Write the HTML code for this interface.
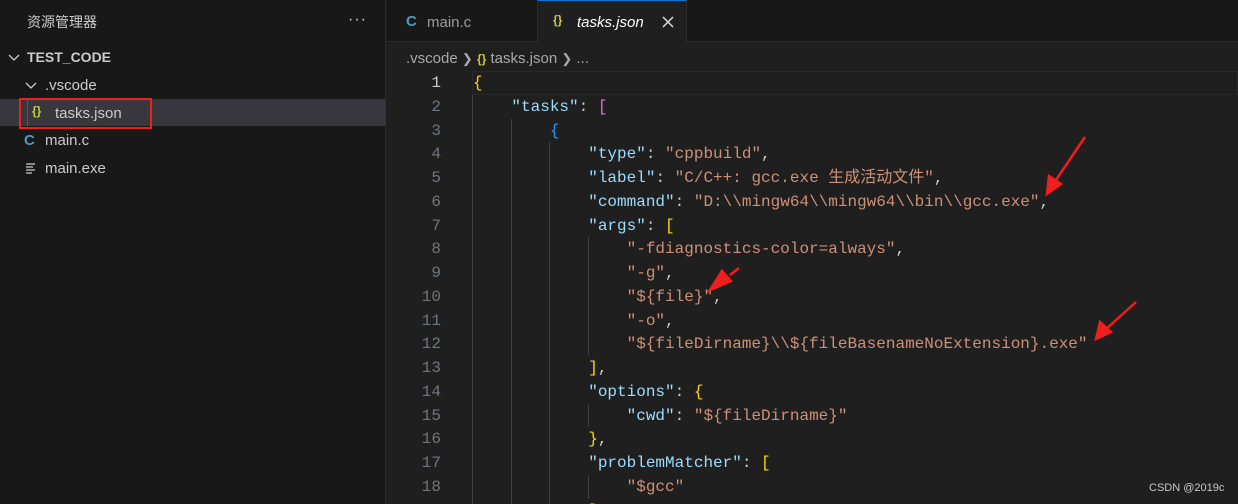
<!DOCTYPE html>
<html style="width:1238px;height:504px;overflow:hidden"><head><meta charset="utf-8"><style>
*{margin:0;padding:0;box-sizing:border-box}
body{width:1238px;height:504px;overflow:hidden;background:#1f1f1f;font-family:"Liberation Sans","Noto Sans CJK SC",sans-serif;position:relative}
.sb{position:absolute;left:0;top:0;width:386px;height:504px;background:#181818;border-right:1px solid #2b2b2b;color:#cccccc;font-size:15px}
.abs{position:absolute;white-space:pre}
.tabs{position:absolute;left:387px;top:0;right:0;height:42px;background:#181818;border-bottom:1px solid #2b2b2b}
.code{position:absolute;left:0;top:0;height:24px;line-height:24px;overflow:visible;font-family:"Liberation Mono","Noto Sans CJK SC",monospace;font-size:16px;white-space:pre}
.ln{position:absolute;left:387px;width:54px;height:24px;line-height:24px;text-align:right;color:#6e7681;font-family:"Liberation Mono",monospace;font-size:16px}
.k{color:#9cdcfe}.s{color:#ce9178}.p{color:#cccccc}.y{color:#ffd700}.m{color:#da70d6}.b{color:#179fff}
.g{position:absolute;width:1px;background:#404040}
#lines{position:absolute;left:0;top:0;width:1238px;height:504px;overflow:hidden}
</style></head><body>
<div class="sb">
 <div class="abs" style="left:27px;top:12px;font-size:14px;color:#cccccc">资源管理器</div>
 <div class="abs" style="left:348px;top:11px;font-size:16px;letter-spacing:1px">···</div>
 <svg class="abs" style="left:7px;top:52px" width="14" height="12"><path d="M2 3 L7 8 L12 3" stroke="#ccc" fill="none" stroke-width="1.3"/></svg>
 <div class="abs" style="left:27px;top:49px;font-size:14px;font-weight:bold">TEST_CODE</div>
 <svg class="abs" style="left:24px;top:80px" width="14" height="12"><path d="M2 3 L7 8 L12 3" stroke="#ccc" fill="none" stroke-width="1.3"/></svg>
 <div class="abs" style="left:45px;top:77px">.vscode</div>
 <div class="abs" style="left:0;top:99px;width:386px;height:27px;background:#37373d"></div>
 <div class="abs" style="left:27px;top:100px;width:1px;height:26px;background:#585858"></div>
 <div class="abs" style="left:19px;top:98px;width:133px;height:31px;border:2px solid #e8221f"></div>
 <div class="abs" style="left:32px;top:104px;font-size:12px;color:#cbcb41;font-weight:bold">{}</div>
 <div class="abs" style="left:55px;top:105px">tasks.json</div>
 <div class="abs" style="left:24px;top:132px;font-size:15px;color:#519aba;font-weight:bold">C</div>
 <div class="abs" style="left:45px;top:132px">main.c</div>
 <svg class="abs" style="left:25px;top:162px" width="12" height="12"><path d="M1 2H10M1 5H8M1 8H10M1 11H7" stroke="#ccc" stroke-width="1.3"/></svg>
 <div class="abs" style="left:45px;top:160px">main.exe</div>
</div>
<div class="tabs">
 <div class="abs" style="left:19px;top:13px;font-size:15px;color:#519aba;font-weight:bold">C</div>
 <div class="abs" style="left:40px;top:14px;font-size:15px;color:#9d9d9d">main.c</div>
 <div class="abs" style="left:150px;top:0;width:150px;height:43px;background:#1f1f1f;border-top:1px solid #0078d4;border-left:1px solid #2b2b2b;border-right:1px solid #2b2b2b"></div>
 <div class="abs" style="left:166px;top:13px;font-size:12px;color:#cbcb41;font-weight:bold">{}</div>
 <div class="abs" style="left:190px;top:14px;font-size:15px;color:#fff;font-style:italic">tasks.json</div>
 <svg class="abs" style="left:274px;top:15px" width="14" height="14"><path d="M2 2L12 12M12 2L2 12" stroke="#ddd" stroke-width="1.5"/></svg>
</div>
<div class="abs" style="left:406px;top:50px;font-size:15px;color:#a9a9a9">.vscode <span style="font-size:13px">❯</span> <span style="color:#cbcb41;font-size:12px;font-weight:bold">{}</span> tasks.json <span style="font-size:13px">❯</span> ...</div>
<div class="abs" style="left:472px;top:71px;width:766px;height:24px;border:1px solid #282828"></div>
<div class="g" style="left:472px;top:95px;height:409px"></div>
<div class="g" style="left:511px;top:119px;height:385px"></div>
<div class="g" style="left:549px;top:142px;height:362px"></div>
<div class="g" style="left:588px;top:237px;height:118px"></div>
<div class="g" style="left:588px;top:404px;height:23px"></div>
<div class="g" style="left:588px;top:475px;height:24px"></div>
<div id="lines"></div>
<div class="abs" style="left:1149px;top:482px;font-size:11px;color:#c8c8c8">CSDN @2019c</div>
<svg class="abs" style="left:0;top:0" width="1238" height="504">
<g stroke="#f01e1e" stroke-width="2.5" fill="#f01e1e">
<line x1="1085" y1="137" x2="1054" y2="183"/><polygon points="1047,194 1049,176 1061,184"/>
<line x1="739" y1="268" x2="730" y2="275"/><polygon points="710,290 722,271 731,281"/>
<line x1="1136" y1="302" x2="1105" y2="330"/><polygon points="1096,339 1100,322 1111,332"/>
</g></svg>
<script>
var L=[
'<span class="y">{</span>',
'    <span class="k">"tasks"</span><span class="p">: </span><span class="m">[</span>',
'        <span class="b">{</span>',
'            <span class="k">"type"</span><span class="p">: </span><span class="s">"cppbuild"</span><span class="p">,</span>',
'            <span class="k">"label"</span><span class="p">: </span><span class="s">"C/C++: gcc.exe 生成活动文件"</span><span class="p">,</span>',
'            <span class="k">"command"</span><span class="p">: </span><span class="s">"D:\\\\mingw64\\\\mingw64\\\\bin\\\\gcc.exe"</span><span class="p">,</span>',
'            <span class="k">"args"</span><span class="p">: </span><span class="y">[</span>',
'                <span class="s">"-fdiagnostics-color=always"</span><span class="p">,</span>',
'                <span class="s">"-g"</span><span class="p">,</span>',
'                <span class="s">"${file}"</span><span class="p">,</span>',
'                <span class="s">"-o"</span><span class="p">,</span>',
'                <span class="s">"${fileDirname}\\\\${fileBasenameNoExtension}.exe"</span>',
'            <span class="y">]</span><span class="p">,</span>',
'            <span class="k">"options"</span><span class="p">: </span><span class="y">{</span>',
'                <span class="k">"cwd"</span><span class="p">: </span><span class="s">"${fileDirname}"</span>',
'            <span class="y">}</span><span class="p">,</span>',
'            <span class="k">"problemMatcher"</span><span class="p">: </span><span class="y">[</span>',
'                <span class="s">"$gcc"</span>',
'            <span class="y">]</span><span class="p">,</span>'];
var h='';
for(var i=0;i<L.length;i++){var t=71+i*23.76;
h+='<div class="ln" style="top:'+t+'px;'+(i==0?'color:#ccc':'')+'">'+(i+1)+'</div>';
h+='<div class="code" style="left:473px;top:'+t+'px">'+L[i]+'</div>';}
document.getElementById('lines').innerHTML=h;
</script>
</body></html>
